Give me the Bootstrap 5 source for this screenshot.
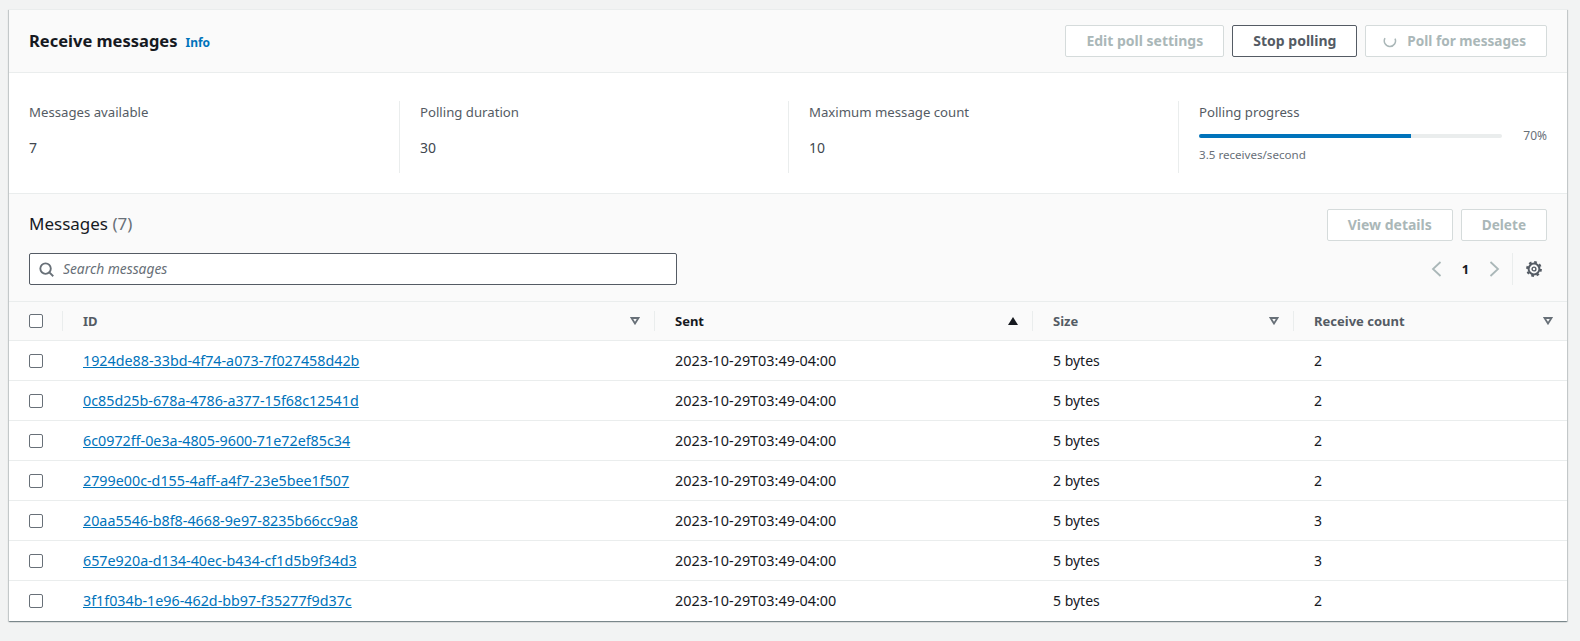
<!DOCTYPE html>
<html lang="en">
<head>
<meta charset="utf-8">
<title>Receive messages</title>
<link rel="stylesheet" href="https://cdn.jsdelivr.net/npm/bootstrap@5.3.0/dist/css/bootstrap.min.css">
<style>
html,body{height:100%}
body{background:#f2f3f3;font-family:"Noto Sans","Open Sans",sans-serif;font-size:14px;line-height:20px;color:#16191f;padding:9px 13px 0 9px;overflow:hidden}
.panel{background:#fff;border-top:1px solid #eaeded;box-shadow:0 1px 1px 0 rgba(0,28,36,.3),1px 1px 1px 0 rgba(0,28,36,.15),-1px 1px 1px 0 rgba(0,28,36,.15);height:612px}
.panel-head{height:63px;background:#fafafa;border-bottom:1px solid #eaeded;padding:0 20px}
.panel-title{font-size:16.5px;font-weight:700;line-height:22px;margin:0}
.info-link{font-size:12px;font-weight:700;color:#0073bb;text-decoration:none;margin-left:8px}
.aws-btn{font-family:inherit;font-size:14px;font-weight:700;line-height:20px;height:32px;padding:0 20px;border-radius:2px;background:#fff;border:1px solid #545b64;color:#545b64;display:inline-flex;align-items:center;white-space:nowrap}
.aws-btn:disabled{opacity:1;background:#fff;border-color:#d5dbdb;color:#aab7b8}
.aws-btn.tight{font-size:13.6px}
.spin{margin-left:-3px;margin-right:10px}
.stats{height:121px;padding:28px 20px 20px 0;border-bottom:1px solid #eaeded}
.stat-col{padding-left:20px;height:72px}
.stat-col+.stat-col{border-left:1px solid #eaeded}
.stat-a{width:390px}.stat-b{width:389px}.stat-c{width:390px}.stat-d{flex:1}
.stat-label{color:#545b64;line-height:20px;margin-top:1px;font-size:13.2px}
.stat-val{margin-top:16px;color:#414750;font-size:14px}
.bar-row{margin-top:6px}
.track{height:4px;background:#eaeded;flex:1;border-radius:2px;overflow:hidden}
.fill{height:4px;background:#0073bb}
.pct{font-size:12px;color:#687078;line-height:16px;width:45px;text-align:right}
.rate{font-size:11.6px;color:#687078;line-height:16px;margin-top:3px}
.msg-head{height:108px;background:#fafafa;padding:15px 20px 0 20px;border-bottom:1px solid #eaeded}
.msg-title{font-size:17px;line-height:26px;font-weight:400;margin:2px 0 0;color:#16191f}
.msg-title span{color:#687078}
.msg-tools{margin-top:12px}
.search{width:648px;height:32px;border:1px solid #545b64;border-radius:2px;background:#fff;padding-left:9px;gap:9px}
.search input{border:0;outline:0;flex:1;background:transparent;font:italic 13.8px/20px "Noto Sans",sans-serif;color:#16191f;padding:0;min-width:0}
.search input::placeholder{color:#687078;opacity:1}
.pager{height:32px}
.pager-num{font-size:13px;font-weight:700;width:47px;text-align:center;color:#16191f}
.pager-sep{width:1px;height:32px;background:#eaeded;margin:0 13px 0 12px}
.gear{margin-right:5px}
.tbl{table-layout:fixed;width:100%;margin:0;border-collapse:separate;border-spacing:0}
.tbl th{height:39px;padding:0;background:#fafafa;font-weight:700;font-size:13px;color:#545b64;border-bottom:1px solid #eaeded;vertical-align:middle}
.tbl th.now{color:#16191f}
.tbl td{height:40px;padding:0 0 0 21px;border-bottom:1px solid #eaeded;vertical-align:middle;color:#16191f;font-size:14px}
.tbl tr:last-child td{border-bottom:0}
.tbl td.chk,.tbl th.chk{padding:0 0 0 20px}
.tbl td a{color:#0073bb;font-size:14.3px}
.tbl td.when{font-size:14.4px}
.th-in{height:20px;padding:0 14px 0 20px;border-left:1px solid #eaeded;display:flex;align-items:center;justify-content:space-between}
.tick{width:14px;height:14px;border:1px solid #687078;border-radius:2px;background:#fff;display:block}
</style>
</head>
<body>
<section class="panel">
  <header class="panel-head d-flex align-items-center justify-content-between">
    <div class="d-flex align-items-baseline">
      <h2 class="panel-title">Receive messages</h2><a class="info-link" href="#">Info</a>
    </div>
    <div class="d-flex gap-2">
      <button class="aws-btn" disabled>Edit poll settings</button>
      <button class="aws-btn">Stop polling</button>
      <button class="aws-btn tight" disabled>
        <svg class="spin" width="14" height="14" viewBox="0 0 14 14" fill="none" stroke="#aab7b8" stroke-width="1.5"><path d="M2 4.2A5.6 5.6 0 1 0 12 4.6"/></svg>Poll for messages</button>
    </div>
  </header>
  <div class="stats d-flex">
    <div class="stat-col stat-a"><div class="stat-label">Messages available</div><div class="stat-val">7</div></div>
    <div class="stat-col stat-b"><div class="stat-label">Polling duration</div><div class="stat-val">30</div></div>
    <div class="stat-col stat-c"><div class="stat-label">Maximum message count</div><div class="stat-val">10</div></div>
    <div class="stat-col stat-d">
      <div class="stat-label">Polling progress</div>
      <div class="bar-row d-flex align-items-center"><div class="track"><div class="fill" style="width:70%"></div></div><div class="pct">70%</div></div>
      <div class="rate">3.5 receives/second</div>
    </div>
  </div>
  <div class="msg-head">
    <div class="d-flex justify-content-between align-items-start">
      <h3 class="msg-title">Messages <span>(7)</span></h3>
      <div class="d-flex gap-2">
        <button class="aws-btn" disabled>View details</button>
        <button class="aws-btn tight" disabled>Delete</button>
      </div>
    </div>
    <div class="msg-tools d-flex justify-content-between align-items-center">
      <label class="search d-flex align-items-center">
        <svg width="15" height="15" viewBox="0 0 16 16" fill="none" stroke="#687078" stroke-width="2"><circle cx="7" cy="7" r="5.6"/><path d="M11 11l4.2 4.2"/></svg>
        <input type="text" placeholder="Search messages">
      </label>
      <div class="pager d-flex align-items-center">
        <svg width="11" height="16" viewBox="0 0 11 16" fill="none" stroke="#aab7b8" stroke-width="1.8"><path d="M9.5 1 2 8l7.5 7"/></svg>
        <span class="pager-num">1</span>
        <svg width="11" height="16" viewBox="0 0 11 16" fill="none" stroke="#aab7b8" stroke-width="1.8"><path d="M1.5 1 9 8l-7.5 7"/></svg>
        <span class="pager-sep"></span>
        <svg class="gear" width="16" height="16" viewBox="0 0 16 16" fill="none" stroke="#545b64"><circle cx="8" cy="8" r="5.4" stroke-width="2"/><circle cx="8" cy="8" r="6.9" stroke-width="2" stroke-dasharray="2.7 2.72"/><circle cx="8" cy="8" r="1.9" stroke-width="1.4"/></svg>
      </div>
    </div>
  </div>
  <table class="tbl">
    <colgroup><col style="width:53px"><col style="width:592px"><col style="width:378px"><col style="width:261px"><col></colgroup>
    <thead><tr>
      <th class="chk"><span class="tick"></span></th>
      <th><div class="th-in">ID <svg width="10" height="8" viewBox="0 0 10 8" fill="#fafafa" stroke="#687078" stroke-width="1.8"><path d="M1.5 1h7L5 6.5z"/></svg></div></th>
      <th class="now"><div class="th-in">Sent <svg width="10" height="8" viewBox="0 0 10 8" fill="#16191f"><path d="M0 8 5 0l5 8z"/></svg></div></th>
      <th><div class="th-in">Size <svg width="10" height="8" viewBox="0 0 10 8" fill="#fafafa" stroke="#687078" stroke-width="1.8"><path d="M1.5 1h7L5 6.5z"/></svg></div></th>
      <th><div class="th-in">Receive count <svg width="10" height="8" viewBox="0 0 10 8" fill="#fafafa" stroke="#687078" stroke-width="1.8"><path d="M1.5 1h7L5 6.5z"/></svg></div></th>
    </tr></thead>
    <tbody>
      <tr><td class="chk"><span class="tick"></span></td><td><a href="#">1924de88-33bd-4f74-a073-7f027458d42b</a></td><td class="when">2023-10-29T03:49-04:00</td><td>5 bytes</td><td>2</td></tr>
      <tr><td class="chk"><span class="tick"></span></td><td><a href="#">0c85d25b-678a-4786-a377-15f68c12541d</a></td><td class="when">2023-10-29T03:49-04:00</td><td>5 bytes</td><td>2</td></tr>
      <tr><td class="chk"><span class="tick"></span></td><td><a href="#">6c0972ff-0e3a-4805-9600-71e72ef85c34</a></td><td class="when">2023-10-29T03:49-04:00</td><td>5 bytes</td><td>2</td></tr>
      <tr><td class="chk"><span class="tick"></span></td><td><a href="#">2799e00c-d155-4aff-a4f7-23e5bee1f507</a></td><td class="when">2023-10-29T03:49-04:00</td><td>2 bytes</td><td>2</td></tr>
      <tr><td class="chk"><span class="tick"></span></td><td><a href="#">20aa5546-b8f8-4668-9e97-8235b66cc9a8</a></td><td class="when">2023-10-29T03:49-04:00</td><td>5 bytes</td><td>3</td></tr>
      <tr><td class="chk"><span class="tick"></span></td><td><a href="#">657e920a-d134-40ec-b434-cf1d5b9f34d3</a></td><td class="when">2023-10-29T03:49-04:00</td><td>5 bytes</td><td>3</td></tr>
      <tr><td class="chk"><span class="tick"></span></td><td><a href="#">3f1f034b-1e96-462d-bb97-f35277f9d37c</a></td><td class="when">2023-10-29T03:49-04:00</td><td>5 bytes</td><td>2</td></tr>
    </tbody>
  </table>
</section>
<script src="https://cdn.jsdelivr.net/npm/bootstrap@5.3.0/dist/js/bootstrap.bundle.min.js"></script>
</body>
</html>
